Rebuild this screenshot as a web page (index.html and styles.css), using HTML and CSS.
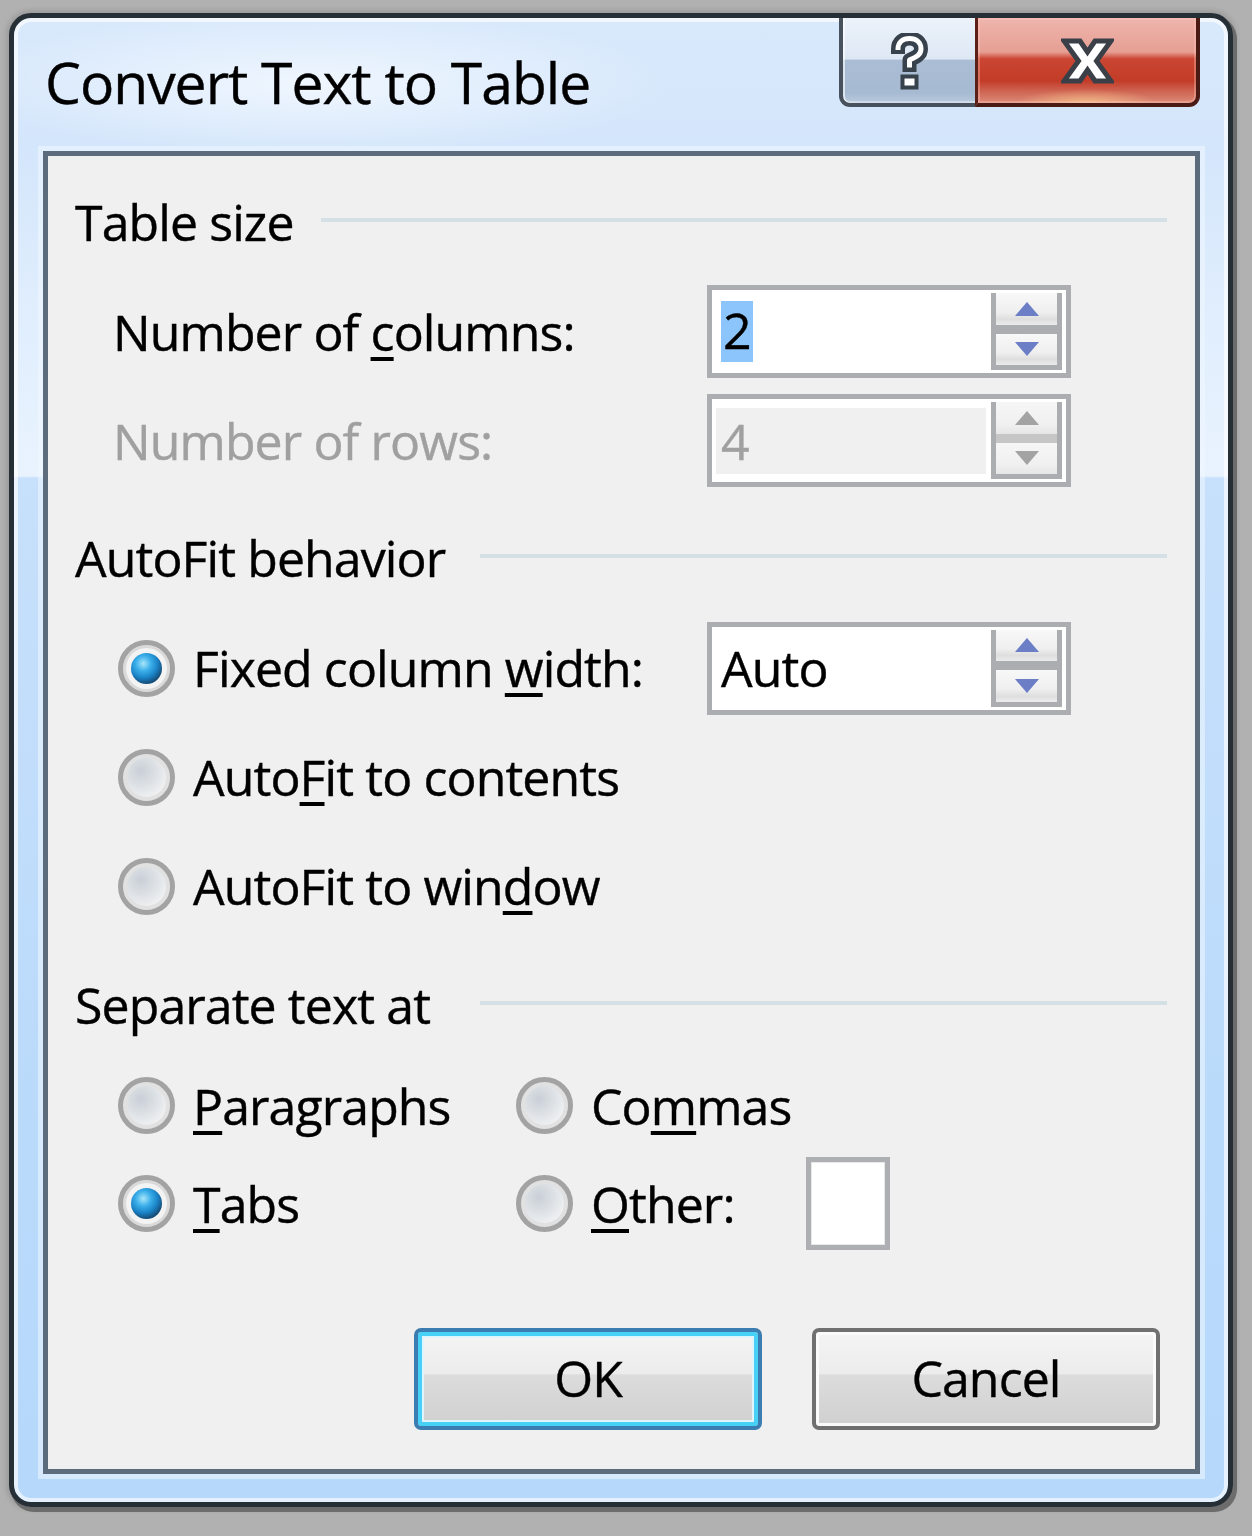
FILE: index.html
```html
<!DOCTYPE html>
<html>
<head>
<meta charset="utf-8">
<title>Convert Text to Table</title>
<link rel="stylesheet" href="styles.css">
</head>
<body>
<div class="window">
  <div class="titlebar">
    <div class="title">Convert Text to Table</div>
    <div class="caption">
      <div class="cbtn help">
        <svg width="37" height="58" viewBox="0 0 37 58">
          <path d="M7 21 L7 16 C7 9 12 5.5 18.5 5.5 C25 5.5 30 9 30 16 C30 22 25 24 18.5 27 L18.5 39" fill="none" stroke="#38424d" stroke-width="14" stroke-linejoin="round"/>
          <path d="M7 17 L7 16 C7 9 12 5.5 18.5 5.5 C25 5.5 30 9 30 16 C30 22 25 24 18.5 27 L18.5 34.5" fill="none" stroke="#ffffff" stroke-width="5" stroke-linejoin="round"/>
          <rect x="11.5" y="43.5" width="14" height="11" fill="#ffffff" stroke="#38424d" stroke-width="4"/>
        </svg>
      </div>
      <div class="cbtn close">
        <svg width="53" height="46" viewBox="0 0 53 46">
          <polygon points="3,3 19,3 26.5,14 34,3 50,3 35.5,23 50,43 34,43 26.5,32 19,43 3,43 17.5,23" fill="#ffffff" stroke="#3a3f48" stroke-width="5" stroke-linejoin="miter"/>
        </svg>
      </div>
    </div>
  </div>

  <div class="client">
    <div class="group-h gh1"><span class="gtext">Table size</span><i class="rule"></i></div>

    <div class="spinrow sr1">
      <span class="lbl">Number of <u>c</u>olumns:</span>
      <div class="spin">
        <div class="field"><span class="sel">2</span></div>
        <div class="spinner">
          <div class="sbtn"><svg width="24" height="14" viewBox="0 0 24 14"><polygon points="12,0 24,14 0,14" class="arr-up"/></svg></div>
          <div class="sdiv"></div>
          <div class="sbtn"><svg width="24" height="14" viewBox="0 0 24 14"><polygon points="0,0 24,0 12,14" class="arr-dn"/></svg></div>
        </div>
      </div>
    </div>

    <div class="spinrow sr2 disabled">
      <span class="lbl">Number of rows:</span>
      <div class="spin">
        <div class="field"><span>4</span></div>
        <div class="spinner">
          <div class="sbtn"><svg width="24" height="14" viewBox="0 0 24 14"><polygon points="12,0 24,14 0,14" class="arr-off"/></svg></div>
          <div class="sdiv"></div>
          <div class="sbtn"><svg width="24" height="14" viewBox="0 0 24 14"><polygon points="0,0 24,0 12,14" class="arr-off"/></svg></div>
        </div>
      </div>
    </div>

    <div class="group-h gh2"><span class="gtext">AutoFit behavior</span><i class="rule"></i></div>

    <div class="radiorow rr1">
      <div class="opt wide"><span class="radio on"></span><span class="lbl">Fixed column <u>w</u>idth:</span></div>
      <div class="spin">
        <div class="field"><span>Auto</span></div>
        <div class="spinner">
          <div class="sbtn"><svg width="24" height="14" viewBox="0 0 24 14"><polygon points="12,0 24,14 0,14" class="arr-up"/></svg></div>
          <div class="sdiv"></div>
          <div class="sbtn"><svg width="24" height="14" viewBox="0 0 24 14"><polygon points="0,0 24,0 12,14" class="arr-dn"/></svg></div>
        </div>
      </div>
    </div>
    <div class="radiorow rr2">
      <div class="opt"><span class="radio"></span><span class="lbl">Auto<u>F</u>it to contents</span></div>
    </div>
    <div class="radiorow rr3">
      <div class="opt"><span class="radio"></span><span class="lbl">AutoFit to win<u>d</u>ow</span></div>
    </div>

    <div class="group-h gh3"><span class="gtext">Separate text at</span><i class="rule"></i></div>

    <div class="seprow sp1">
      <div class="opt"><span class="radio"></span><span class="lbl"><u>P</u>aragraphs</span></div>
      <div class="opt"><span class="radio"></span><span class="lbl">Co<u>m</u>mas</span></div>
    </div>
    <div class="seprow sp2">
      <div class="opt"><span class="radio on"></span><span class="lbl"><u>T</u>abs</span></div>
      <div class="opt other"><span class="radio"></span><span class="lbl"><u>O</u>ther:</span><div class="textbox"></div></div>
    </div>

    <div class="btnrow">
      <div class="btn ok">OK</div>
      <div class="btn cancel">Cancel</div>
    </div>
  </div>
</div>
</body>
</html>
```

FILE: styles.css
```css
html, body {
  margin: 0;
  padding: 0;
}
body {
  width: 1252px;
  height: 1536px;
  overflow: hidden;
  background: #b1b1b1;
  padding: 13px 0 0 9px;
  box-sizing: border-box;
  font-family: "Open Sans", "Noto Sans", sans-serif;
  color: #000;
}

.window {
  width: 1224px;
  height: 1494px;
  box-sizing: border-box;
  border: 5px solid #262e36;
  border-radius: 22px;
  background: linear-gradient(180deg,
    #d9e9fc 0px, #d4e6fb 130px, #dfedfd 280px, #e9f3fe 458px,
    #c7e0fb 460px, #bcdbfb 1000px, #b5d8fb 100%);
  box-shadow: inset 0 0 0 4px rgba(255,255,255,0.65),
              3px 4px 0 1px #6c6c6c,
              0 0 5px 3px rgba(0,0,0,0.12);
  display: flex;
  flex-direction: column;
  overflow: hidden;
}

/* ---------- title bar ---------- */
.titlebar {
  height: 133px;
  flex: none;
  display: flex;
  align-items: center;
  padding-left: 31px;
  background: radial-gradient(ellipse 360px 70px at 300px 66px, rgba(244,249,255,0.85), rgba(244,249,255,0) 100%);
}
.title {
  flex: 1;
  font-size: 57px;
  letter-spacing: -1px;
  color: #000;
  padding-bottom: 5px;
  -webkit-text-stroke: 0.4px #000;
}
.caption {
  align-self: flex-start;
  display: flex;
  margin-right: 28px;
}
.cbtn {
  height: 89px;
  box-sizing: border-box;
  display: flex;
  align-items: center;
  justify-content: center;
}
.help {
  width: 136px;
  border-left: 4px solid #48525e;
  border-bottom: 4px solid #48525e;
  border-bottom-left-radius: 11px;
  background: linear-gradient(180deg, #ebf2fa 0%, #dee8f4 48%, #aabdd5 50%, #a6bad2 88%, #b9cadd 100%);
  box-shadow: inset 2px 0 0 rgba(255,255,255,0.6), inset 0 -2px 0 rgba(255,255,255,0.35);
  padding-top: 2px;
}
.close {
  width: 225px;
  border-left: 3px solid #5c1f17;
  border-right: 4px solid #4a1a15;
  border-bottom: 4px solid #4a1a15;
  border-bottom-right-radius: 11px;
  background:
    radial-gradient(ellipse 70px 14px at 50% 100%, rgba(250,200,140,0.75), rgba(250,200,140,0) 100%),
    linear-gradient(180deg, #efb5ad 0%, #e69f93 40%, #cb4632 48%, #c23c28 74%, #cf6452 86%, #dc8a78 100%);
  box-shadow: inset 0 0 0 2px rgba(255,200,190,0.35);
  padding-top: 1px;
}

/* ---------- client area ---------- */
.client {
  height: 1323px;
  flex: none;
  margin: 0 28px 0 29px;
  box-sizing: border-box;
  border: 5px solid #5d6c7d;
  background: #f0f0f0;
  box-shadow: 0 0 0 5px rgba(240,247,255,0.55);
  padding: 36px 28px 0 27px;
  font-size: 50px;
  letter-spacing: -0.9px;
  -webkit-text-stroke: 0.4px currentColor;
}
.client u {
  text-decoration-thickness: 4px;
  text-underline-offset: 6px;
}

.group-h {
  height: 60px;
  display: flex;
  align-items: center;
  gap: 27px;
}
.gtext {
  white-space: nowrap;
}
.gh2 .gtext, .gh3 .gtext { min-width: 378px; }
.rule {
  flex: 1;
  height: 4px;
  background: #d5dfe6;
  margin-bottom: 4px;
}
.gh2 { margin-top: 41px; }
.gh3 { margin-top: 43px; }

.spinrow {
  height: 93px;
  display: flex;
  align-items: center;
  padding-left: 38px;
}
.spinrow .lbl {
  width: 594px;
  flex: none;
}
.sr1 { margin-top: 33px; }
.sr2 { margin-top: 16px; }
.disabled .lbl { color: #a0a0a0; }

.spin {
  width: 364px;
  height: 93px;
  flex: none;
  box-sizing: border-box;
  border: 5px solid #abadb1;
  background: #fff;
  display: flex;
  align-items: center;
  padding: 3px 4px 3px 9px;
}
.field {
  flex: 1;
  height: 100%;
  display: flex;
  align-items: center;
}
.sel {
  background: #8cc5fb;
  padding: 2px 2px 4px 2px;
  line-height: 55px;
}
.disabled .spin { padding-left: 4px; }
.disabled .field {
  background: #f0f0f0;
  height: 66px;
  margin-right: 5px;
  padding-left: 5px;
  color: #a0a0a0;
}

.spinner {
  width: 71px;
  height: 77px;
  flex: none;
  box-sizing: border-box;
  border: 5px solid #abadb1;
  border-top: 0;
  display: flex;
  flex-direction: column;
}
.sbtn {
  flex: 1;
  display: flex;
  align-items: center;
  justify-content: center;
  background: linear-gradient(180deg, #f8f8f8 0%, #efefef 60%, #dedede 82%, #ececec 100%);
}
.sdiv {
  height: 9px;
  background: #abadb1;
}
.disabled .sdiv { background: #c6c6c6; }
.disabled .sbtn { background: linear-gradient(180deg, #f6f6f6 0%, #f0f0f0 70%, #e6e6e6 100%); }
.arr-up { fill: #6b7ec6; }
.arr-dn { fill: #6b7ec6; }
.arr-off { fill: #a3a3a3; }

.radiorow {
  height: 92px;
  display: flex;
  align-items: center;
  padding-left: 43px;
}
.rr1 { margin-top: 34px; }
.rr2, .rr3 { margin-top: 17px; }

.opt {
  display: flex;
  align-items: center;
  gap: 18px;
}
.opt.wide { width: 589px; flex: none; }
.opt .lbl { white-space: nowrap; }

.radio {
  width: 57px;
  height: 57px;
  flex: none;
  box-sizing: border-box;
  border-radius: 50%;
  border: 5px solid #a3a3a3;
  background: radial-gradient(circle at 38% 36%, #c9cfd6 0%, #dfe3e7 40%, #f6f6f6 78%);
  box-shadow: inset 0 0 0 4px #e1e1e1;
  display: flex;
  align-items: center;
  justify-content: center;
}
.radio.on {
  background: #f3f3f3;
  box-shadow: inset 0 0 0 3px #dadada;
}
.radio.on::after {
  content: "";
  width: 31px;
  height: 31px;
  border-radius: 50%;
  background: radial-gradient(circle at 40% 34%, #a8e6fa 0%, #3aaee9 28%, #1a82c6 52%, #17507c 72%, #14385a 100%);
}

.seprow {
  height: 93px;
  display: grid;
  grid-template-columns: 398px auto;
  align-items: center;
  padding-left: 43px;
}
.sp1 { margin-top: 24px; }
.sp2 { margin-top: 5px; }
.other .lbl { width: 197px; }
.textbox {
  width: 84px;
  height: 93px;
  box-sizing: border-box;
  border: 5px solid #adafb3;
  background: #fff;
  box-shadow: inset 0 0 0 1px #e8e8e8;
}

.btnrow {
  margin-top: 78px;
  height: 102px;
  display: flex;
  justify-content: flex-end;
  gap: 50px;
  padding-right: 7px;
}
.btn {
  width: 348px;
  height: 102px;
  box-sizing: border-box;
  border-radius: 7px;
  display: flex;
  align-items: center;
  justify-content: center;
  background: linear-gradient(180deg, #f4f4f4 0%, #ececec 44%, #dcdcdc 46%, #d0d0d0 100%);
  padding-bottom: 2px;
}
.ok {
  border: 4px solid #3b7db0;
  box-shadow: inset 0 0 0 4px #48d1f6, inset 0 0 0 6px #dff4fb;
}
.cancel {
  border: 4px solid #707070;
  box-shadow: inset 0 0 0 3px #fbfbfb;
}
```
